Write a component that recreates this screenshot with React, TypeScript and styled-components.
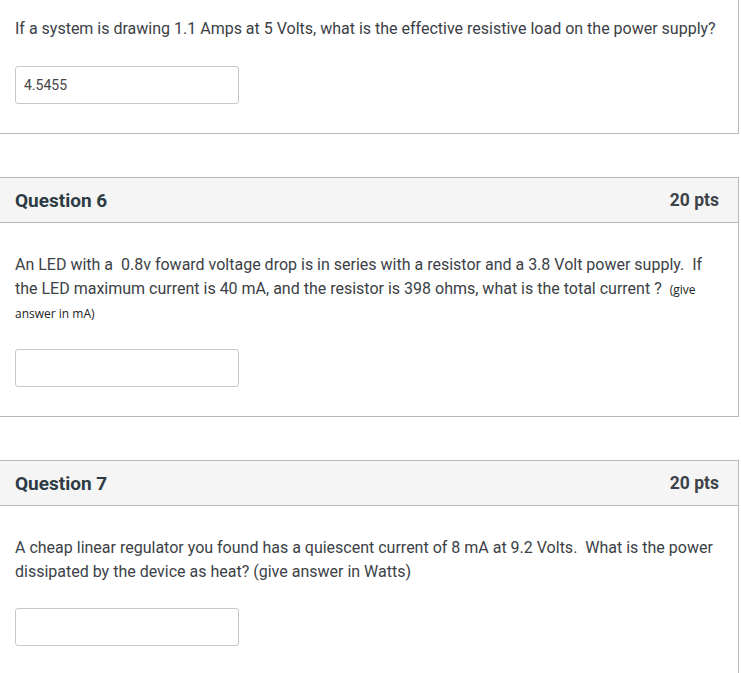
import React from "react";
import styled, { createGlobalStyle } from "styled-components";

const Global = createGlobalStyle`
  html, body { margin: 0; padding: 0; background: #ffffff; }
  body { font-family: Roboto, "Liberation Sans", sans-serif; color: #3b4146; }
  * { box-sizing: border-box; }
`;

const Page = styled.div`
  width: 739px;
  display: flex;
  flex-direction: column;
  gap: 43px;
`;

const Card = styled.section<{ $cropped?: boolean }>`
  border: 1px solid #b9b9b9;
  border-left: none;
  border-top: ${(p) => (p.$cropped ? "none" : "1px solid #b9b9b9")};
  background: #ffffff;
`;

const Header = styled.header`
  height: 45px;
  background: #f5f5f5;
  border-bottom: 1px solid #b9b9b9;
  display: flex;
  align-items: center;
  justify-content: space-between;
  padding: 0 19px 0 15px;
`;

const Title = styled.h2`
  margin: 0;
  font-family: Roboto, "Liberation Sans", sans-serif;
  font-weight: 700;
  font-size: 19px;
  color: #2d3b45;
`;

const Points = styled.span`
  font-family: Roboto, "Liberation Sans", sans-serif;
  font-weight: 700;
  font-size: 17.5px;
  color: #3d4348;
`;

const Body = styled.div<{ $top: number; $bottom: number; $gap: number }>`
  padding: ${(p) => p.$top}px 15px ${(p) => p.$bottom}px 15px;
  display: flex;
  flex-direction: column;
  gap: ${(p) => p.$gap}px;
`;

const Text = styled.p`
  margin: 0;
  font-size: 16px;
  line-height: 24px;
  color: #3b4146;
  white-space: pre-wrap;
`;

const Small = styled.span`
  font-family: "Open Sans", "Liberation Sans", sans-serif;
  font-size: 12px;
  line-height: 12px;
  color: #222;
`;

const Answer = styled.input`
  width: 224px;
  height: 38px;
  border: 1px solid #c8c8c8;
  border-radius: 3px;
  padding: 0 8px;
  font-family: Roboto, "Liberation Sans", sans-serif;
  font-size: 14px;
  color: #444;
  background: #fff;
  outline: none;
`;

export default function App() {
  return (
    <>
      <Global />
      <Page>
        <Card $cropped>
          <Body $top={17} $bottom={29} $gap={25}>
            <Text>If a system is drawing 1.1 Amps at 5 Volts, what is the effective resistive load on the power supply?</Text>
            <Answer defaultValue="4.5455" />
          </Body>
        </Card>
        <Card>
          <Header>
            <Title>Question 6</Title>
            <Points>20 pts</Points>
          </Header>
          <Body $top={30} $bottom={29} $gap={24}>
            <Text>
              {"An LED with a  0.8v foward voltage drop is in series with a resistor and a 3.8 Volt power supply.  If the LED maximum current is 40 mA, and the resistor is 398 ohms, what is the total current ?  "}
              <Small>(give answer in mA)</Small>
            </Text>
            <Answer />
          </Body>
        </Card>
        <Card>
          <Header>
            <Title>Question 7</Title>
            <Points>20 pts</Points>
          </Header>
          <Body $top={30} $bottom={30} $gap={24}>
            <Text>{"A cheap linear regulator you found has a quiescent current of 8 mA at 9.2 Volts.  What is the power dissipated by the device as heat? (give answer in Watts)"}</Text>
            <Answer />
          </Body>
        </Card>
      </Page>
    </>
  );
}
